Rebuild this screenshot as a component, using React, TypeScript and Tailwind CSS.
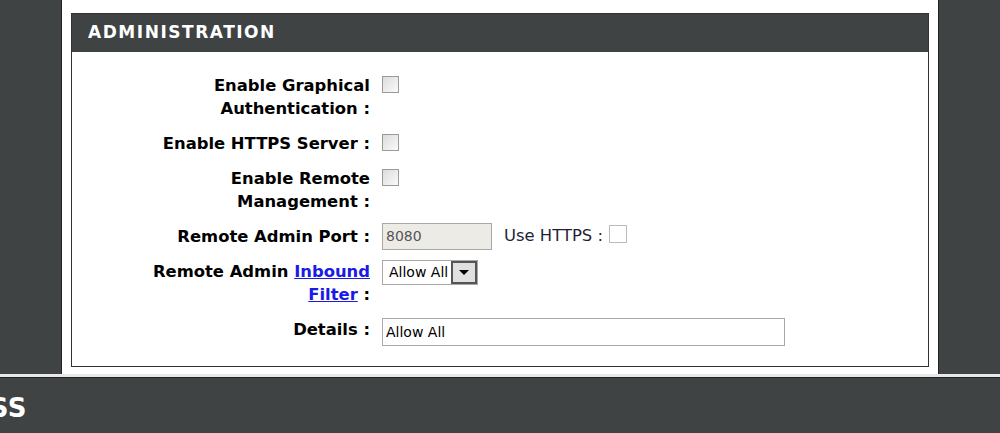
export default function App() {
  const lbl = "text-right font-bold text-[#000] leading-[23px]";
  const cb = "w-[17px] h-[17px] border border-[#9a9a9a] bg-gradient-to-br from-[#dcdcdc] to-[#fafafa] mt-[2px]";
  return (
    <div className="w-[1000px] h-[433px] bg-[#404344] relative overflow-hidden" style={{ fontFamily: '"DejaVu Sans", Verdana, sans-serif' }}>
      <div className="flex h-[374px]">
        <div className="w-[62px] bg-[#404344] border-r border-[#222]" />
        <div className="w-[876px] bg-white pt-[13px] px-[9px] pb-[7px]">
          <div className="border border-[#333] h-full flex flex-col">
            <div className="h-[38px] bg-[#404344] flex items-center px-[16px] text-white font-bold text-[17px] tracking-[0.09em]">ADMINISTRATION</div>
            <div className="grid grid-cols-[298px_1fr] gap-x-[12px] text-[16.4px] pt-[22px]">
              <div className={lbl}>Enable Graphical<br />Authentication :</div>
              <div><div className={cb} /></div>
              <div className={lbl + " mt-[12px]"}>Enable HTTPS Server :</div>
              <div className="mt-[12px]"><div className={cb} /></div>
              <div className={lbl + " mt-[12px]"}>Enable Remote<br />Management :</div>
              <div className="mt-[12px]"><div className={cb} /></div>
              <div className={lbl + " mt-[12px]"}>Remote Admin Port :</div>
              <div className="mt-[10px] flex items-center gap-[12px]">
                <div className="w-[110px] h-[27px] bg-[#ecebe6] border border-[#a8a8a8] text-[14px] text-[#555] px-[3px] flex items-center">8080</div>
                <span className="text-[16.4px] text-[#1f1f3a]">Use HTTPS :</span>
                <div className="w-[18px] h-[18px] border border-[#bbb] bg-white -mt-[6px] -ml-[6px]" />
              </div>
              <div className={lbl + " mt-[10px]"}>Remote Admin <a className="text-[#1a1ae6] underline">Inbound<br />Filter</a> :</div>
              <div className="mt-[10px]">
                <div className="inline-flex items-center h-[25px] border border-[#a8a8a8] bg-white text-[14px] pl-[6px]">
                  Allow All
                  <div className="ml-[3px] w-[26px] h-[23px] border-2 border-[#555] bg-[#e0e0e0] flex items-center justify-center">
                    <div className="w-0 h-0 border-l-[5px] border-r-[5px] border-t-[5px] border-l-transparent border-r-transparent border-t-black" />
                  </div>
                </div>
              </div>
              <div className={lbl + " mt-[12px]"}>Details :</div>
              <div className="mt-[12px]">
                <div className="w-[403px] h-[28px] border border-[#a8a8a8] bg-white text-[14px] px-[3px] flex items-center">Allow All</div>
              </div>
            </div>
          </div>
        </div>
        <div className="flex-1 bg-[#404344] border-l border-[#222]" />
      </div>
      <div className="h-[3px] bg-[#e8e8e8]" />
      <div className="border-t border-[#222] text-white font-bold text-[26px] leading-none pt-[17px] -ml-[46px] tracking-wide">LESS</div>
    </div>
  );
}
